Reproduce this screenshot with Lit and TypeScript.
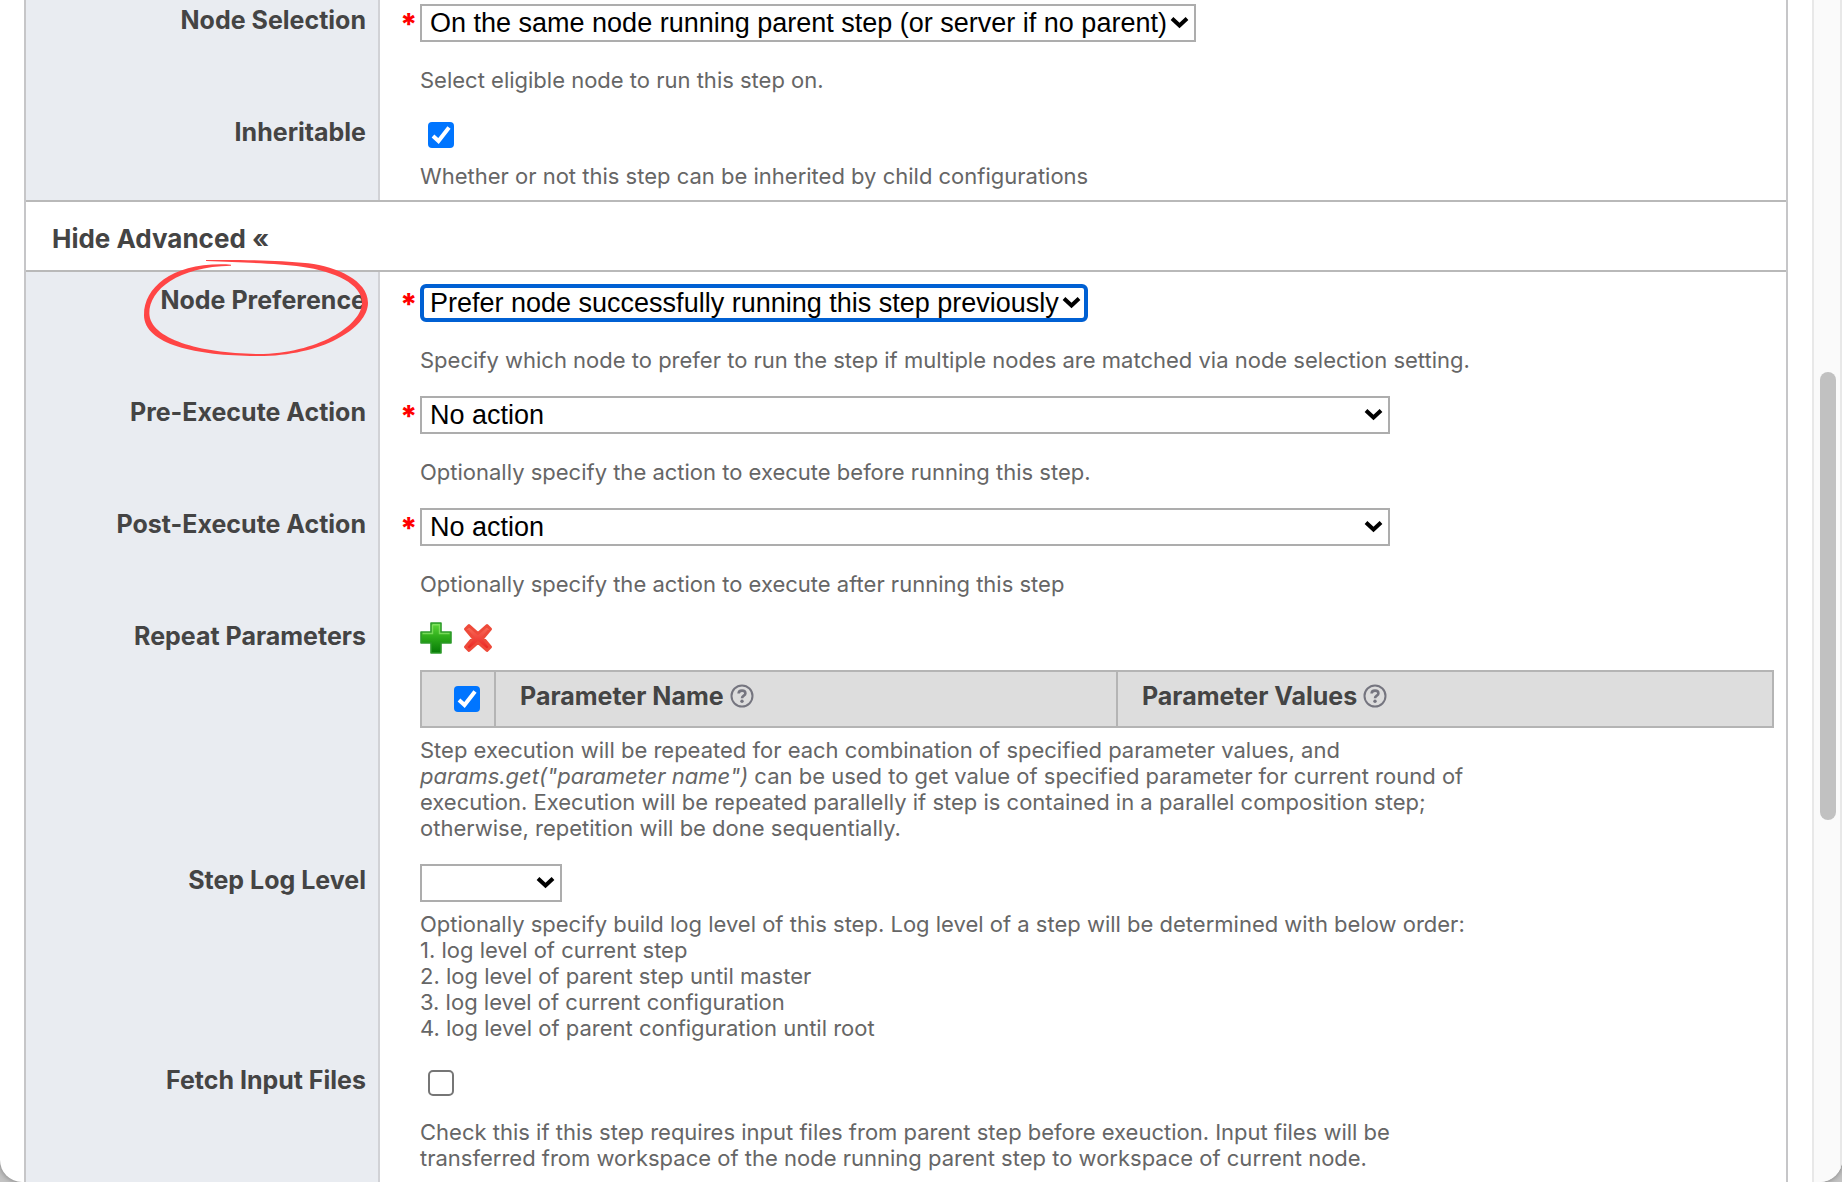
import { LitElement, html, css, svg, nothing } from "lit";
import { customElement } from "lit/decorators.js";

const chevron = svg`<path d="M2 2.5 L9.5 9.5 L17 2.5" fill="none" stroke="#000" stroke-width="4"/>`;

@customElement("app-root")
export class AppRoot extends LitElement {
  static styles = css`
    :host {
      display: block;
      height: 100vh;
      overflow: hidden;
      background: #c4c4c4;
      font-family: Inter, "Noto Sans", sans-serif;
      color: #444;
    }
    * { box-sizing: border-box; }
    .window {
      display: flex;
      height: 100%;
      overflow: hidden;
      background: #fff;
      border-radius: 0 0 22px 22px;
      box-shadow: 0 0 6px #777;
    }
    .page { flex: 1; min-width: 0; padding: 0 24px; overflow: hidden; }
    .form {
      border: solid #c6c6c8;
      border-width: 0 2px;
      min-height: 100%;
    }
    .row { display: grid; grid-template-columns: 354px 1fr; }
    .name {
      position: relative;
      padding: 14px 12px 0 0;
      background: #e9ecf1;
      border-right: 2px solid #d1d2d6;
      text-align: right;
      font-size: 25px;
      line-height: 28px;
      font-weight: 700;
    }
    .field {
      display: grid;
      grid-template-columns: 20px minmax(0, 1fr);
      align-content: start;
      padding: 12px 12px 11px 20px;
    }
    .top .name { padding-top: 6px; }
    .top .field { padding-top: 4px; }
    .star { color: #f00; font-weight: 800; font-size: 30px; line-height: 40px; }
    .body { grid-column: 2; }
    .pick { position: relative; display: flex; width: fit-content; max-width: 100%; }
    .pick svg { position: absolute; right: 7px; top: 12px; pointer-events: none; }
    select {
      appearance: none;
      height: 38px;
      padding: 0 27px 0 8px;
      border: 2px solid #adadad;
      border-radius: 0;
      background: #fff;
      color: #000;
      font-family: "Liberation Sans", Arial, sans-serif;
      font-size: 27px;
      outline: none;
    }
    .wide { width: 970px; }
    .short { width: 142px; }
    .wide select, .short select { width: 100%; }
    .active select { border: 4px solid #0060d3; border-radius: 6px; padding: 0 25px 0 6px; }
    .help {
      margin: 0;
      padding-top: 25px;
      max-width: 1080px;
      color: #666;
      font-size: 22px;
      line-height: 26px;
    }
    .near .help { padding-top: 9px; }
    .tick {
      appearance: none;
      display: block;
      width: 26px;
      height: 26px;
      margin: 0;
      border: 2px solid #767676;
      border-radius: 5px;
      background: #fff;
    }
    .tick:checked { border: 0; border-radius: 4px; background: #0075ff; }
    .box { position: relative; display: block; width: 26px; height: 26px; }
    .box svg { position: absolute; inset: 0; pointer-events: none; }
    .body > .box { margin: 6px 0 0 8px; }
    .mid .help { padding-top: 15px; }
    .far .help { padding-top: 23px; }
    .advanced {
      display: flex;
      align-items: center;
      height: 72px;
      width: 100%;
      padding: 6px 0 0 26px;
      border: solid #b9b9b9;
      border-width: 2px 0;
      background: #fff;
      color: #444;
      font: 700 26px/32px Inter, "Noto Sans", sans-serif;
      text-align: left;
    }
    .tools { display: flex; gap: 10px; padding: 2px 0 16px; }
    .tools button { width: 32px; height: 32px; padding: 0; border: 0; background: none; }
    .tools svg { display: block; }
    table {
      width: 100%;
      border-collapse: collapse;
      table-layout: fixed;
      background: #ddd;
    }
    th {
      height: 56px;
      padding: 0 0 6px 24px;
      border: 2px solid #b4b4b4;
      text-align: left;
      font-size: 25px;
      line-height: 28px;
      font-weight: 700;
    }
    th.check { width: 74px; padding: 0 0 0 32px; }
    th.param { width: 46%; }
    .caption { display: flex; align-items: center; gap: 6px; }
    .scribble {
      position: absolute;
      z-index: 1;
      right: -7px;
      top: -22px;
      pointer-events: none;
    }
    .rail {
      display: flex;
      flex-direction: column;
      width: 30px;
      padding: 0 4px 0 6px;
      background: #fafafa;
      border: solid #e8e8e8;
      border-width: 0 2px;
    }
    .before { flex: 372; }
    .thumb { flex: 448; border-radius: 8px; background: #c1c1c1; }
    .after { flex: 362; }
  `;

  private tick(id: string, on: boolean, label?: string) {
    return html`<span class="box">
      <input class="tick" type="checkbox" id=${id} .checked=${on} aria-label=${label ?? nothing} />
      ${on
        ? html`<svg width="26" height="26" viewBox="0 0 26 26"><path d="M5 14 L10.5 19 L21 5.5" fill="none" stroke="#fff" stroke-width="4"/></svg>`
        : nothing}
    </span>`;
  }

  private pick(id: string, value: string, kind: string) {
    return html`<div class="pick ${kind}">
      <select id=${id}><option>${value}</option></select>
      <svg width="19" height="13" viewBox="0 0 19 13">${chevron}</svg>
    </div>`;
  }

  private row(id: string, name: string, body: unknown, help: unknown, kind = "", star = false, mark: unknown = nothing) {
    return html`<div class="row ${kind}">
      <div class="name"><label for=${id}>${name}</label>${mark}</div>
      <div class="field">
        ${star ? html`<span class="star">*</span>` : nothing}
        <div class="body">${body}<p class="help">${help}</p></div>
      </div>
    </div>`;
  }

  private scribble() {
    return html`<svg class="scribble" width="250" height="115" viewBox="0 0 750 345">
      <path fill="#ff4545" d="M288 44 C120 34 27 108 27 195 C27 285 190 318 370 318 C560 318 699 235 699 158
        C699 92 605 50 520 40 C430 31 330 29 213 30 L213 33 C330 38 430 40 500 50
        C600 64 681 102 681 158 C681 226 545 311 370 312 C200 311 44 268 43 190 C43 118 130 50 288 47 Z"/>
    </svg>`;
  }

  private question() {
    return html`<svg width="24" height="24" viewBox="0 0 24 24" fill="none" stroke="#75757f">
      <circle cx="12" cy="12" r="10.5" stroke-width="2"/>
      <path d="M8.6 9.6 C8.6 5.6 15.4 5.8 15.4 9.4 C15.4 11.8 12 11.6 12 14.2" stroke-width="2.6"/>
      <circle cx="12" cy="17.3" r="1.7" fill="#75757f" stroke="none"/>
    </svg>`;
  }

  private repeat() {
    return html`<div class="tools">
        <button id="repeat" aria-label="Add">
          <svg width="32" height="32" viewBox="0 0 32 32">
            <defs><linearGradient id="g" x1="0" y1="0" x2="0" y2="1">
              <stop offset="0" stop-color="#5fd93a"/><stop offset=".45" stop-color="#2fae1b"/><stop offset="1" stop-color="#067a06"/>
            </linearGradient></defs>
            <path d="M11 1H21V10H31V21H21V31H11V21H1V10H11Z" fill="url(#g)" stroke="#2d9a2a" stroke-width="1.6" stroke-linejoin="round"/>
            <path d="M12.5 2.8H19.5V11.5H29.5" fill="none" stroke="#8fe56f" stroke-width="1.4" opacity=".7"/>
            <path d="M2.5 11.5H12.5V3" fill="none" stroke="#8fe56f" stroke-width="1.4" opacity=".7"/>
          </svg>
        </button>
        <button aria-label="Delete">
          <svg width="32" height="32" viewBox="0 0 32 32">
            <defs><linearGradient id="r" x1="0" y1="0" x2="0" y2="1">
              <stop offset="0" stop-color="#f8705c"/><stop offset="1" stop-color="#ea1f1f"/>
            </linearGradient></defs>
            <path d="M7 3.5 L16 11.5 L25 3.5 L28.5 7 L21 16 L28.5 25 L25 28.5 L16 20.5 L7 28.5 L3.5 25 L11 16 L3.5 7 Z" fill="url(#r)" stroke="#ee4a3a" stroke-width="3" stroke-linejoin="round"/>
          </svg>
        </button>
      </div>
      <table>
        <thead><tr>
          <th class="check">${this.tick("all", true, "Select all")}</th>
          <th class="param"><span class="caption">Parameter Name ${this.question()}</span></th>
          <th><span class="caption">Parameter Values ${this.question()}</span></th>
        </tr></thead>
      </table>`;
  }

  render() {
    return html`<div class="window">
      <main class="page"><div class="form">
        ${this.row("selection", "Node Selection",
          this.pick("selection", "On the same node running parent step (or server if no parent)", "auto"),
          "Select eligible node to run this step on.", "top", true)}
        ${this.row("inheritable", "Inheritable", this.tick("inheritable", true),
          "Whether or not this step can be inherited by child configurations", "mid")}
        <button class="advanced">Hide Advanced «</button>
        ${this.row("preference", "Node Preference",
          this.pick("preference", "Prefer node successfully running this step previously", "auto active"),
          "Specify which node to prefer to run the step if multiple nodes are matched via node selection setting.", "", true, this.scribble())}
        ${this.row("pre", "Pre-Execute Action", this.pick("pre", "No action", "wide"),
          "Optionally specify the action to execute before running this step.", "", true)}
        ${this.row("post", "Post-Execute Action", this.pick("post", "No action", "wide"),
          "Optionally specify the action to execute after running this step", "", true)}
        ${this.row("repeat", "Repeat Parameters", this.repeat(),
          html`Step execution will be repeated for each combination of specified parameter values, and
            <i>params.get("parameter name")</i> can be used to get value of specified parameter for current round of
            execution. Execution will be repeated parallelly if step is contained in a parallel composition step;
            otherwise, repetition will be done sequentially.`, "near")}
        ${this.row("log", "Step Log Level", this.pick("log", "", "short"),
          html`Optionally specify build log level of this step. Log level of a step will be determined with below order:<br>1. log level of current step<br>2. log level of parent step until master<br>3. log level of current configuration<br>4. log level of parent configuration until root`, "near")}
        ${this.row("fetch", "Fetch Input Files", this.tick("fetch", false),
          "Check this if this step requires input files from parent step before exeuction. Input files will be transferred from workspace of the node running parent step to workspace of current node.", "far")}
      </div></main>
      <div class="rail"><div class="before"></div><div class="thumb"></div><div class="after"></div></div>
    </div>`;
  }
}
